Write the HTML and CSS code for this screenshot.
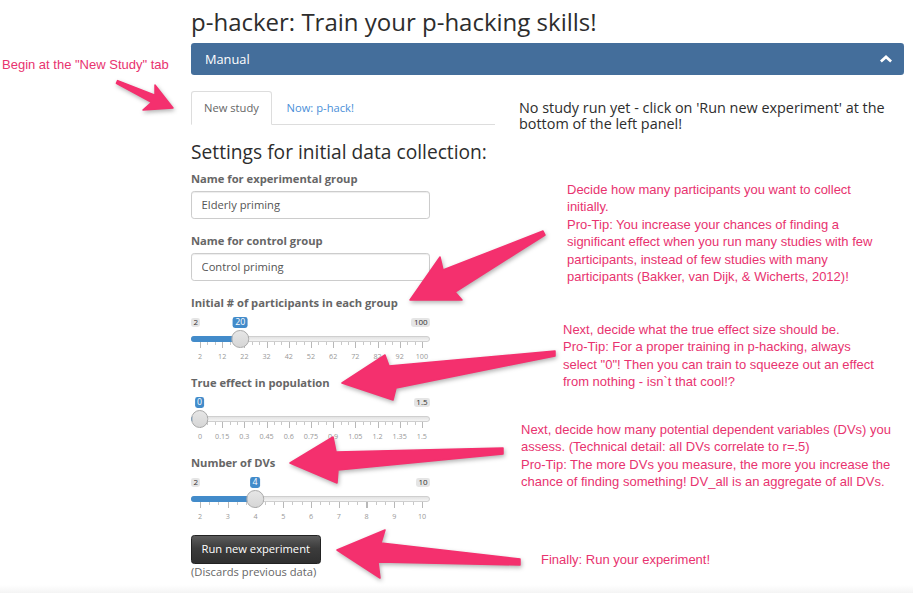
FILE: index.html
```html
<!DOCTYPE html>
<html lang="en">
<head>
<meta charset="utf-8">
<title>p-hacker</title>
<link rel="stylesheet" href="styles.css">
</head>
<body>
<div class="page">
  <div class="gutter">
    <p class="note note-begin">Begin at the "New Study" tab</p>
  </div>
  <div class="app">
    <h2 class="title">p-hacker: Train your p-hacking skills!</h2>
    <div class="panel-head">
      <span>Manual</span>
      <svg class="chev" width="12" height="8" viewBox="0 0 12 8"><path d="M6 0 L12 5.6 L10.2 7.6 L6 3.8 L1.8 7.6 L0 5.6 Z" fill="#fff"/></svg>
    </div>
    <div class="row">
      <div class="sidebar">
        <ul class="tabs">
          <li class="tab active">New study</li>
          <li class="tab link">Now: p-hack!</li>
        </ul>
        <div class="tab-content">
          <h3 class="section">Settings for initial data collection:</h3>
          <div class="field field-text">
            <label class="lbl">Name for experimental group</label>
            <input class="txt" type="text" value="Elderly priming">
          </div>
          <div class="field field-text">
            <label class="lbl">Name for control group</label>
            <input class="txt" type="text" value="Control priming">
          </div>
          <div class="field">
            <label class="lbl">Initial # of participants in each group</label>
            <div class="slider grid-10" style="--p:18.37">
              <div class="irs-minmax"><span class="irs-mm">2</span><span class="irs-mm">100</span></div>
              <div class="irs-line"><div class="irs-bar"></div></div>
              <div class="irs-grid">
                <div class="irs-ticks"></div>
                <div class="irs-labels"><span>2</span><span>12</span><span>22</span><span>32</span><span>42</span><span>52</span><span>62</span><span>72</span><span>82</span><span>92</span><span>100</span></div>
              </div>
              <div class="irs-rail"><span class="irs-single">20</span><span class="irs-handle"></span></div>
            </div>
          </div>
          <div class="field">
            <label class="lbl">True effect in population</label>
            <div class="slider grid-10" style="--p:0">
              <div class="irs-minmax"><span class="irs-mm hidden">0</span><span class="irs-mm">1.5</span></div>
              <div class="irs-line"><div class="irs-bar"></div></div>
              <div class="irs-grid">
                <div class="irs-ticks"></div>
                <div class="irs-labels"><span>0</span><span>0.15</span><span>0.3</span><span>0.45</span><span>0.6</span><span>0.75</span><span>0.9</span><span>1.05</span><span>1.2</span><span>1.35</span><span>1.5</span></div>
              </div>
              <div class="irs-rail"><span class="irs-single">0</span><span class="irs-handle"></span></div>
            </div>
          </div>
          <div class="field">
            <label class="lbl">Number of DVs</label>
            <div class="slider grid-8" style="--p:25">
              <div class="irs-minmax"><span class="irs-mm">2</span><span class="irs-mm">10</span></div>
              <div class="irs-line"><div class="irs-bar"></div></div>
              <div class="irs-grid">
                <div class="irs-ticks"></div>
                <div class="irs-labels"><span>2</span><span>3</span><span>4</span><span>5</span><span>6</span><span>7</span><span>8</span><span>9</span><span>10</span></div>
              </div>
              <div class="irs-rail"><span class="irs-single">4</span><span class="irs-handle"></span></div>
            </div>
          </div>
          <button class="btn" type="button">Run new experiment</button>
          <p class="hint">(Discards previous data)</p>
        </div>
      </div>
      <div class="main">
        <p class="status">No study run yet - click on 'Run new experiment' at the<br>bottom of the left panel!</p>
      </div>
    </div>
  </div>
</div>

<div class="annotations">
  <p class="note note-a">Decide how many participants you want to collect<br>initially.<br>Pro-Tip: You increase your chances of finding a<br>significant effect when you run many studies with few<br>participants, instead of few studies with many<br>participants (Bakker, van Dijk, &amp; Wicherts, 2012)!</p>
  <p class="note note-b">Next, decide what the true effect size should be.<br>Pro-Tip: For a proper training in p-hacking, always<br>select "0"! Then you can train to squeeze out an effect<br>from nothing - isn`t that cool!?</p>
  <p class="note note-c">Next, decide how many potential dependent variables (DVs) you<br>assess. (Technical detail: all DVs correlate to r=.5)<br>Pro-Tip: The more DVs you measure, the more you increase the<br>chance of finding something! DV_all is an aggregate of all DVs.</p>
  <p class="note note-d">Finally: Run your experiment!</p>
  <svg class="arrows" width="913" height="593" viewBox="0 0 913 593">
    <g fill="#f4306e" stroke="#f4306e" stroke-width="1.5" stroke-linejoin="round">
      <polygon points="117.6,80.6 155,95.2 155,85 173,108 143,110 151.6,102.4 116.4,83.4"/>
      <polygon points="543,231 443,270 440,257 410,300 462,300 455,292 545,235"/>
      <polygon points="555,351 389,366 385,355 342,383 393,400 396,388 555,356"/>
      <polygon points="503,448 336,452 333,437 290,463 337,483 338,470 503,454"/>
      <polygon points="520,559 381,543 385,530 337,550 380,578 378,562 520,565"/>
    </g>
  </svg>
</div>
</body>
</html>
```
FILE: styles.css
```css
html {
  background: linear-gradient(#ffffff 0, #ffffff 585px, #f4f4f4 593px);
  height: 593px;
}
body {
  margin: 0;
  height: 593px;
  overflow: hidden;
  position: relative;
  font-family: "Open Sans", sans-serif;
  color: #666;
}
.page {
  display: flex;
}
.gutter {
  width: 191px;
  flex: none;
}
.note {
  margin: 0;
  font-family: "Liberation Sans", Arial, sans-serif;
  font-size: 13px;
  line-height: 17.6px;
  color: #e8336f;
  white-space: nowrap;
}
.note-begin {
  margin: 56px 0 0 2px;
}
.app {
  width: 713px;
  flex: none;
}
.title {
  margin: 8.5px 0 8px 0;
  font-size: 24px;
  line-height: 26.4px;
  font-weight: 400;
  color: #2d2d2d;
}
.panel-head {
  height: 32px;
  box-sizing: border-box;
  background: #446e9b;
  border-radius: 3.2px;
  display: flex;
  align-items: center;
  justify-content: space-between;
  padding: 0 12px 0 14px;
  color: #fff;
  font-size: 12.8px;
}
.chev {
  display: block;
}
.row {
  display: flex;
  margin-top: 16px;
}
.sidebar {
  width: 304px;
  flex: none;
}
.main {
  margin-left: 24px;
  width: 385px;
}
.status {
  margin: 9px 0 0;
  font-size: 14.4px;
  line-height: 16px;
  color: #2d2d2d;
  white-space: nowrap;
}
.tabs {
  display: flex;
  list-style: none;
  margin: 0;
  padding: 0;
  border-bottom: 1px solid #ddd;
}
.tab {
  font-size: 11.2px;
  line-height: 16px;
  padding: 8px 12px;
  margin-right: 1.6px;
  margin-bottom: -1px;
  border: 1px solid transparent;
  border-radius: 3.2px 3.2px 0 0;
}
.tab.active {
  border-color: #ddd #ddd transparent;
  background: #fff;
  color: #666;
}
.tab.link {
  color: #4a8fd8;
}
.section {
  margin: 16px 0 8.6px;
  font-size: 19.2px;
  line-height: 21.12px;
  font-weight: 400;
  color: #2d2d2d;
}
.field {
  margin-bottom: 12px;
}
.field-text {
  margin-bottom: 14px;
}
.lbl {
  display: block;
  font-weight: 700;
  font-size: 11.2px;
  line-height: 16px;
  margin-bottom: 4px;
  color: #666;
}
.txt {
  display: block;
  box-sizing: border-box;
  width: 239px;
  height: 28px;
  margin: 0;
  padding: 0 9.6px;
  border: 1px solid #ccc;
  border-radius: 3.2px;
  box-shadow: inset 0 1px 1px rgba(0,0,0,0.075);
  font-family: "Open Sans", sans-serif;
  font-size: 11.2px;
  color: #555;
  background: #fff;
}

/* slider */
.slider {
  position: relative;
  width: 239px;
  height: 48px;
}
.grid-10 { --major: 22.2px; --minor: 7.4px; }
.grid-8 { --major: 27.75px; --minor: 9.25px; }
.irs-minmax {
  display: flex;
  justify-content: space-between;
  align-items: flex-start;
  height: 14px;
  box-sizing: border-box;
  padding-top: 3px;
}
.irs-mm {
  font-size: 8px;
  line-height: 8px;
  padding: 0.8px 2.4px;
  background: rgba(0,0,0,0.1);
  border-radius: 2.4px;
  color: #333;
}
.irs-mm.hidden {
  visibility: hidden;
}
.irs-line {
  position: relative;
  margin-top: 7px;
  height: 6.4px;
  box-sizing: border-box;
  border: 1px solid #cfcfcf;
  border-radius: 3.2px;
  background: linear-gradient(#e2e2e2, #f4f4f4);
}
.irs-bar {
  position: absolute;
  left: -1px;
  top: -1px;
  bottom: -1px;
  width: calc(8.5px + var(--p) * 2.22px);
  background: #428bca;
  border-radius: 3.2px 0 0 3.2px;
}
.irs-grid {
  margin: 0 8.5px;
}
.irs-ticks {
  width: 223px;
  height: 6px;
  background-image:
    repeating-linear-gradient(to right, #b8b8b8 0, #b8b8b8 1px, transparent 1px, transparent var(--major)),
    repeating-linear-gradient(to right, #c8c8c8 0, #c8c8c8 1px, transparent 1px, transparent var(--minor));
  background-size: 100% 100%, 100% 3px;
  background-repeat: no-repeat;
}
.irs-labels {
  display: flex;
  justify-content: space-between;
  width: 223px;
  margin-top: 3.6px;
}
.irs-labels span {
  width: 1px;
  display: flex;
  justify-content: center;
  white-space: nowrap;
  font-size: 7.2px;
  line-height: 9px;
  color: #999;
}
.irs-rail {
  position: absolute;
  left: 8.5px;
  right: 8.5px;
  top: 0;
  height: 100%;
}
.irs-single {
  position: absolute;
  top: 2px;
  left: calc(var(--p) * 1%);
  transform: translateX(-50%);
  font-size: 8.8px;
  line-height: 9.6px;
  padding: 1px 2.4px;
  background: #428bca;
  color: #fff;
  border-radius: 2.4px;
}
.irs-handle {
  position: absolute;
  top: 15.4px;
  left: calc(var(--p) * 1%);
  transform: translateX(-50%);
  width: 17.6px;
  height: 17.6px;
  box-sizing: border-box;
  border: 1px solid #aaa;
  border-radius: 50%;
  background: linear-gradient(#e6e6e6, #d6d6d6);
}

.btn {
  display: block;
  margin: 2.4px 0 0;
  font-family: "Open Sans", sans-serif;
  font-size: 11.2px;
  line-height: 16px;
  color: #fff;
  padding: 5.6px 9.6px;
  border: 1px solid #222;
  border-radius: 3.2px;
  background: linear-gradient(#5c5c5c, #3c3c3c 45%, #303030);
}
.hint {
  margin: 0;
  font-size: 11.2px;
  line-height: 16px;
  color: #666;
}

/* annotation layer */
.annotations {
  position: absolute;
  left: 0;
  top: 0;
  width: 913px;
  height: 593px;
  pointer-events: none;
}
.annotations .note {
  position: absolute;
}
.note-a { left: 567px; top: 180.5px; }
.note-b { left: 563px; top: 320.5px; }
.note-c { left: 521px; top: 420.5px; }
.note-d { left: 541px; top: 551px; }
.arrows {
  position: absolute;
  left: 0;
  top: 0;
  filter: drop-shadow(1px 2px 2px rgba(0,0,0,0.3));
}
```
